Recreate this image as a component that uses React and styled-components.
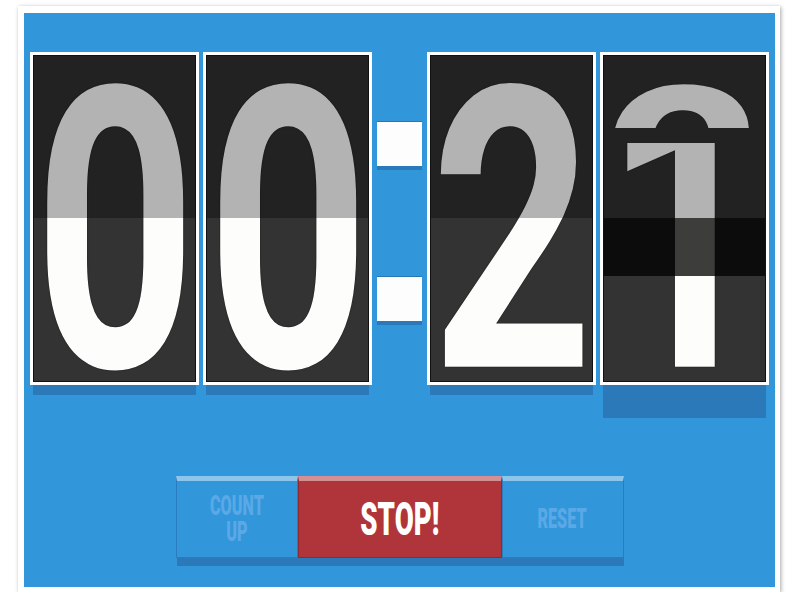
import React from "react";
import styled, { createGlobalStyle } from "styled-components";

const GlobalStyle = createGlobalStyle`
  html, body {
    margin: 0;
    padding: 0;
    background: #fff;
  }
  body {
    font-family: Roboto, "Liberation Sans", sans-serif;
  }
`;

const Frame = styled.div`
  width: 762px;
  height: 586px;
  margin: 6px 0 0 18px;
  box-sizing: border-box;
  padding: 7px 5px 5px 6px;
  background: #fff;
  box-shadow: 1px 1px 4px rgba(0, 0, 0, 0.35);
`;

const Panel = styled.div`
  height: 100%;
  box-sizing: border-box;
  padding-top: 39px;
  background: #3296db;
  display: flex;
  flex-direction: column;
  align-items: center;
`;

const Row = styled.div`
  display: flex;
  align-items: flex-start;
  gap: 4px;
  height: 366px;
`;

const Card = styled.div`
  width: 169px;
  display: flex;
  flex-direction: column;
  align-items: center;
`;

const Face = styled.div`
  width: 169px;
  box-sizing: border-box;
  border: 3px solid #fff;
`;

const Inner = styled.div`
  border: 1px solid #111;
`;

const Half = styled.div`
  position: relative;
  height: ${(p) => (p.$top ? 162 : 163)}px;
  overflow: hidden;
  background: ${(p) => (p.$top ? "#222" : "#333")};
`;

const Glyph = styled.div`
  height: 325px;
  line-height: 325px;
  text-align: center;
  font-family: Roboto, "Liberation Sans", sans-serif;
  font-weight: 700;
  font-size: 283px;
  color: ${(p) => (p.$top ? "#b3b3b3" : "#fdfdfb")};
  margin-top: ${(p) => (p.$top ? 0 : -162)}px;
  text-shadow: 0 0 1px rgba(0, 0, 0, 0.9);
  transform: translateY(14px) scaleY(1.39);
`;

const FlapGlyph = styled(Glyph)`
  transform-origin: 50% 0;
  transform: translateY(-18px) scaleY(0.84);
`;

const Flap = styled.div`
  position: absolute;
  top: 0;
  left: 0;
  right: 0;
  height: 87px;
  background: #222;
`;

const FlapClip = styled.div`
  height: 72px;
  overflow: hidden;
`;

const Shade = styled.div`
  position: absolute;
  top: 0;
  left: 0;
  right: 0;
  height: 58px;
  background: rgba(0, 0, 0, 0.76);
`;

const Drop = styled.div`
  width: 163px;
  height: ${(p) => p.$h}px;
  background: #2b79b9;
`;

const Colon = styled.div`
  width: 47px;
  display: flex;
  flex-direction: column;
  align-items: center;
  padding-top: 70px;
  gap: 111px;
`;

const Dot = styled.div`
  width: 45px;
  height: 44px;
  background: #fdfdfd;
  box-shadow: 0 4px 0 #2b79b9, 0 -1px 0 rgba(20, 90, 150, 0.5);
`;

const ButtonBar = styled.div`
  margin-top: 58px;
  display: flex;
  flex-direction: column;
  align-items: center;
`;

const Buttons = styled.div`
  display: flex;
`;

const Btn = styled.div`
  width: ${(p) => p.$w}px;
  height: 82px;
  box-sizing: border-box;
  border: 1px solid ${(p) => (p.$red ? "#93282d" : "#2a7cbf")};
  border-top: 5px solid rgba(255, 255, 255, 0.45);
  background: ${(p) => (p.$red ? "#b0353a" : "#3296db")};
  display: flex;
  align-items: center;
  justify-content: center;
`;

const Label = styled.span`
  display: inline-block;
  text-align: center;
  font-family: Roboto, "Liberation Sans", sans-serif;
  font-weight: 900;
  font-size: ${(p) => (p.$big ? 46 : 27)}px;
  line-height: ${(p) => (p.$big ? 46 : 26)}px;
  color: ${(p) => (p.$big ? "#fff" : "#5aa9e6")};
  transform: scaleX(0.6);
  white-space: nowrap;
`;

const BarShadow = styled.div`
  width: 447px;
  height: 8px;
  background: #2b79b9;
  align-self: flex-end;
`;

const Digit = ({ value }) => (
  <Card>
    <Face>
      <Inner>
        <Half $top>
          <Glyph $top>{value}</Glyph>
        </Half>
        <Half>
          <Glyph>{value}</Glyph>
        </Half>
      </Inner>
    </Face>
    <Drop $h={10} />
  </Card>
);

const FlippingDigit = ({ from, to }) => (
  <Card>
    <Face>
      <Inner>
        <Half $top>
          <Glyph $top>{to}</Glyph>
          <Flap>
            <FlapClip>
              <FlapGlyph $top>{from}</FlapGlyph>
            </FlapClip>
          </Flap>
        </Half>
        <Half>
          <Glyph>{to}</Glyph>
          <Shade />
        </Half>
      </Inner>
    </Face>
    <Drop $h={33} />
  </Card>
);

export default function App() {
  return (
    <>
      <GlobalStyle />
      <Frame>
        <Panel>
          <Row>
            <Digit value="0" />
            <Digit value="0" />
            <Colon>
              <Dot />
              <Dot />
            </Colon>
            <Digit value="2" />
            <FlippingDigit from="2" to="1" />
          </Row>
          <ButtonBar>
            <Buttons>
              <Btn $w={122}>
                <Label>
                  COUNT
                  <br />
                  UP
                </Label>
              </Btn>
              <Btn $w={204} $red>
                <Label $big>STOP!</Label>
              </Btn>
              <Btn $w={122}>
                <Label>RESET</Label>
              </Btn>
            </Buttons>
            <BarShadow />
          </ButtonBar>
        </Panel>
      </Frame>
    </>
  );
}
